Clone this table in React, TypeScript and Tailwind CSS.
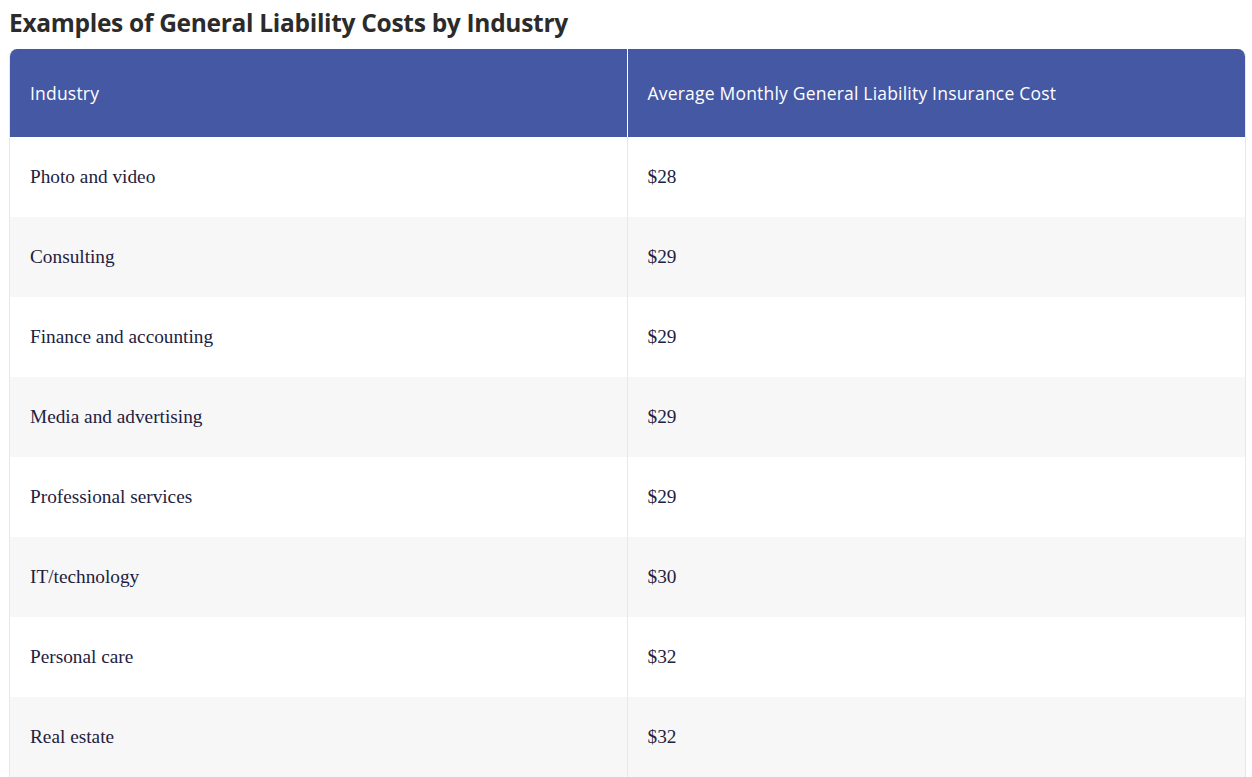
import React from "react";

const rows: [string, string][] = [
  ["Photo and video", "$28"],
  ["Consulting", "$29"],
  ["Finance and accounting", "$29"],
  ["Media and advertising", "$29"],
  ["Professional services", "$29"],
  ["IT/technology", "$30"],
  ["Personal care", "$32"],
  ["Real estate", "$32"],
];

export default function App() {
  return (
    <div className="w-[1252px] h-[777px] overflow-hidden bg-white">
      <h2
        className="pl-[9px] pt-[8px] h-[49px] text-[24.5px] font-bold leading-[30px] text-[#2b2b2b] tracking-[-0.3px]"
        style={{ fontFamily: "'Open Sans', 'Noto Sans', sans-serif" }}
      >
        Examples of General Liability Costs by Industry
      </h2>
      <div className="ml-[9px] w-[1237px] border-x border-[#e6e8ee] rounded-t-[8px] overflow-hidden">
        <div
          className="grid grid-cols-2 bg-[#4558a3] text-white text-[17.5px] h-[88px] tracking-[0.2px]"
          style={{ fontFamily: "'Open Sans', 'Noto Sans', sans-serif" }}
        >
          <div className="flex items-center px-5 border-r border-white">Industry</div>
          <div className="flex items-center px-5">Average Monthly General Liability Insurance Cost</div>
        </div>
        {rows.map(([a, b], i) => (
          <div
            key={a}
            className={`grid grid-cols-2 h-[80px] text-[19.3px] text-[#1e2140] ${i % 2 === 1 ? "bg-[#f7f7f7]" : "bg-white"}`}
            style={{ fontFamily: "'Liberation Serif', Georgia, serif" }}
          >
            <div className="flex items-center px-5 border-r border-[#e6e8ee]">{a}</div>
            <div className="flex items-center px-5">{b}</div>
          </div>
        ))}
      </div>
    </div>
  );
}
